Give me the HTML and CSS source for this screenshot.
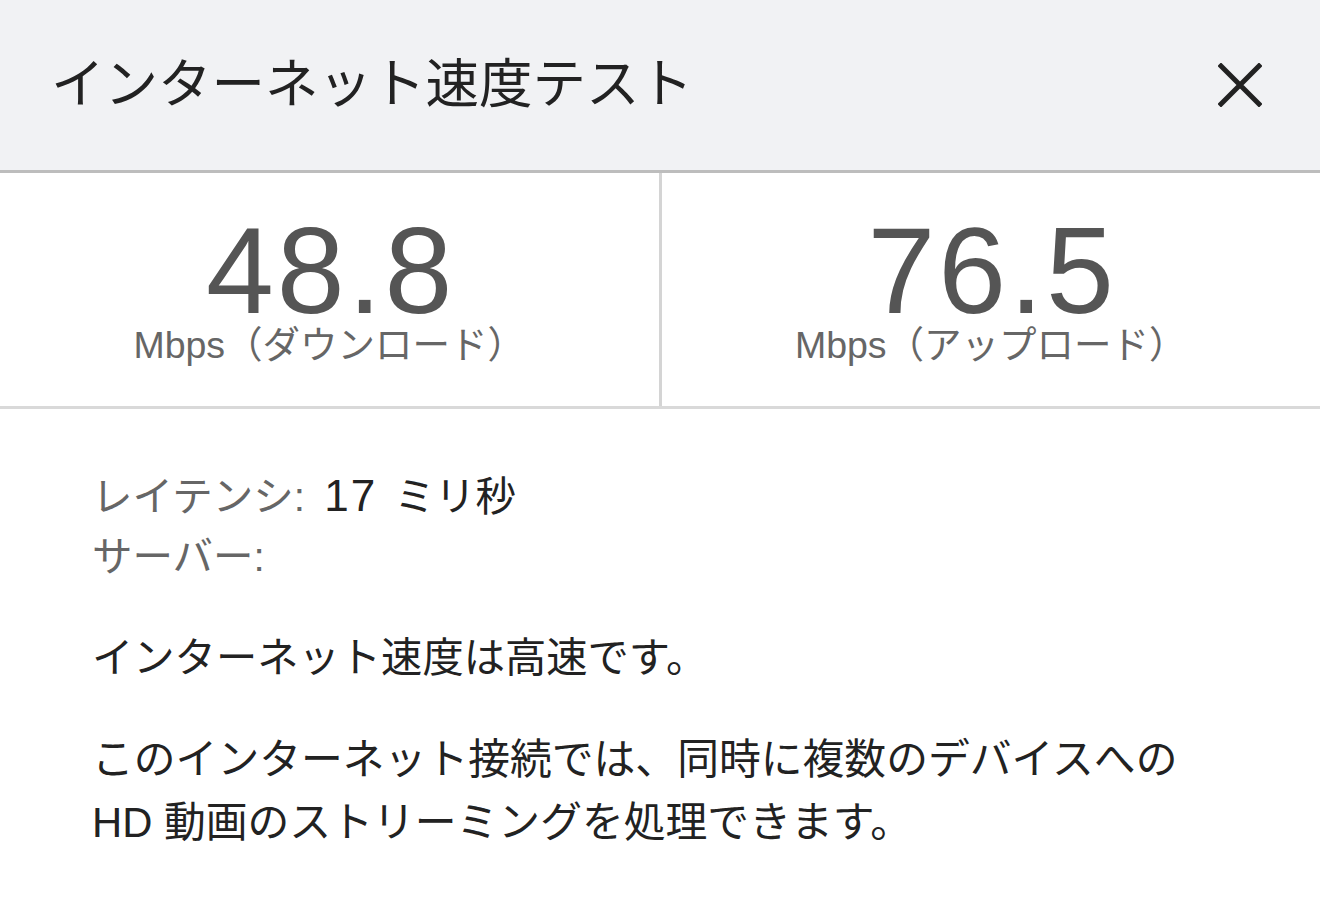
FILE: index.html
```html
<!DOCTYPE html>
<html lang="ja">
<head>
<meta charset="utf-8">
<title>インターネット速度テスト</title>
<link rel="stylesheet" href="styles.css">
</head>
<body>
<div class="panel">
  <header class="header">
    <h1 class="title">インターネット速度テスト</h1>
    <button class="close" aria-label="閉じる">
      <svg width="44" height="44" viewBox="0 0 44 44"><path d="M3 3 L41 41 M41 3 L3 41" stroke="#222" stroke-width="5" stroke-linecap="square" fill="none"/></svg>
    </button>
  </header>
  <section class="stats">
    <div class="stat stat-left">
      <div class="value">48.8</div>
      <div class="unit">Mbps（ダウンロード）</div>
    </div>
    <div class="stat">
      <div class="value">76.5</div>
      <div class="unit">Mbps（アップロード）</div>
    </div>
  </section>
  <section class="details">
    <div class="meta">
      <div class="meta-row"><span class="label">レイテンシ:</span> <span class="data"><span class="num">17</span> ミリ秒</span></div>
      <div class="meta-row"><span class="label">サーバー:</span></div>
    </div>
    <p class="summary">インターネット速度は高速です。</p>
    <p class="desc">このインターネット接続では、同時に複数のデバイスへの<br>HD 動画のストリーミングを処理できます。</p>
  </section>
</div>
</body>
</html>
```
FILE: styles.css
```css
html, body {
  margin: 0;
  padding: 0;
  background: #ffffff;
}
body {
  font-family: "Liberation Sans", "Noto Sans CJK JP", sans-serif;
  color: #222222;
  width: 1320px;
}
.header {
  height: 170px;
  background: #f1f2f4;
  border-bottom: 3px solid #bdbdbd;
  display: flex;
  align-items: center;
  justify-content: space-between;
  padding: 0 58px 0 51px;
}
.title {
  margin: 0;
  font-size: 53.5px;
  font-weight: normal;
  color: #222222;
  line-height: 1;
}
.close {
  background: none;
  border: 0;
  padding: 0;
  width: 44px;
  height: 44px;
  display: flex;
}
.stats {
  display: flex;
  height: 233px;
  border-bottom: 3px solid #d9d9d9;
}
.stat {
  flex: 1;
  display: flex;
  flex-direction: column;
  align-items: center;
  padding-top: 42px;
}
.stat-left {
  border-right: 3px solid #d4d4d4;
}
.value {
  font-size: 122px;
  line-height: 112px;
  color: #555555;
  letter-spacing: 3px;
  padding-left: 3px;
}
.unit {
  font-size: 37.5px;
  line-height: 36px;
  color: #666666;
}
.details {
  padding: 57px 0 0 92px;
}
.meta {
  font-size: 40.5px;
  line-height: 60px;
}
.label {
  color: #666666;
}
.data {
  color: #222222;
  margin-left: 8px;
}
.num {
  font-size: 44px;
  letter-spacing: 2px;
  margin-right: 6px;
}
.summary {
  margin: 41px 0 0;
  font-size: 41.3px;
  line-height: 60px;
}
.desc {
  margin: 40px 0 0;
  font-size: 41.8px;
  line-height: 63px;
}
```
